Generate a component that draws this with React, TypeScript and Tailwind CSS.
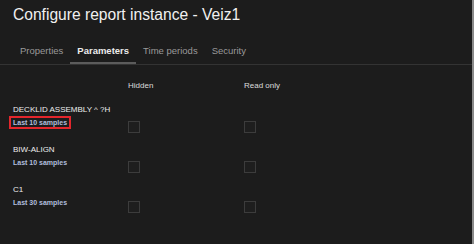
const tabs = ["Properties", "Parameters", "Time periods", "Security"];

const rows = [
  { name: "DECKLID ASSEMBLY ^ ?H", samples: "Last 10 samples", marked: true },
  { name: "BIW-ALIGN", samples: "Last 10 samples", marked: false },
  { name: "C1", samples: "Last 30 samples", marked: false },
];

function Box() {
  return <div className="w-[12px] h-[12px] border border-[#3c3c3c] bg-[#1e1e1e]" />;
}

export default function App() {
  return (
    <div
      className="w-[474px] h-[244px] bg-[#1c1c1c] flex overflow-hidden"
      style={{ fontFamily: '"Liberation Sans", Arial, sans-serif' }}
    >
      <div className="flex-1 flex flex-col">
        <h1 className="pt-[5px] pl-[13px] text-[15.6px] leading-[20px] text-[#f0f0f0]">
          Configure report instance - Veiz1
        </h1>

        <div className="mt-[20px] flex pl-[13px] border-b border-[#333333]">
          {tabs.map((t) => {
            const active = t === "Parameters";
            return (
              <div
                key={t}
                className={
                  active
                    ? "px-[7px] pb-[5px] text-[9.5px] leading-[12px] font-bold text-[#ececec] border-b-2 border-[#5c5c5c]"
                    : "px-[7px] pb-[5px] text-[9.5px] leading-[12px] text-[#9a9a9a] border-b-2 border-transparent"
                }
              >
                {t}
              </div>
            );
          })}
        </div>

        <div className="mt-[16px] pl-[13px] grid grid-cols-[115px_116px_1fr] text-[8px] leading-[10px] text-[#dcdcdc]">
          <div />
          <div>Hidden</div>
          <div>Read only</div>
        </div>

        <div className="mt-[14px] pl-[13px] flex flex-col">
          {rows.map((r) => (
            <div key={r.name} className="h-[40px] grid grid-cols-[115px_116px_1fr] items-start">
              <div className="flex flex-col items-start">
                <div className="text-[8px] leading-[10px] text-[#ececec]">{r.name}</div>
                <div
                  className={
                    r.marked
                      ? "mt-[1px] -ml-[4px] px-[2px] border-2 border-[#e3262c] text-[7px] leading-[9px] font-bold text-[#b0bcdc]"
                      : "mt-[3px] text-[7px] leading-[9px] font-bold text-[#b0bcdc]"
                  }
                >
                  {r.samples}
                </div>
              </div>
              <div className="mt-[16px]">
                <Box />
              </div>
              <div className="mt-[16px]">
                <Box />
              </div>
            </div>
          ))}
        </div>
      </div>
      <div className="w-[2px] bg-[#8a8a8a]" />
    </div>
  );
}
